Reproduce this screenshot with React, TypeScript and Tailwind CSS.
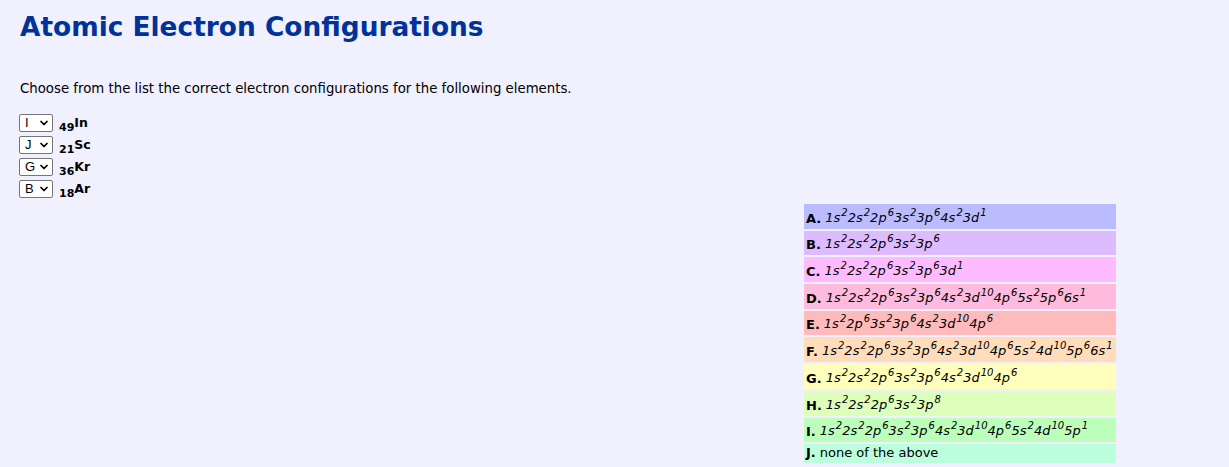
import React from 'react';
import { ChevronDown } from 'lucide-react';

type Answer = {
  letter: string;
  bg: string;
  config: [string, string][];
};

// orbital + electron count pairs; empty config = "none of the above"
const answers: Answer[] = [
  { letter: 'A', bg: 'bg-[#bbbbff]', config: [['1s', '2'], ['2s', '2'], ['2p', '6'], ['3s', '2'], ['3p', '6'], ['4s', '2'], ['3d', '1']] },
  { letter: 'B', bg: 'bg-[#ddbbff]', config: [['1s', '2'], ['2s', '2'], ['2p', '6'], ['3s', '2'], ['3p', '6']] },
  { letter: 'C', bg: 'bg-[#ffbbff]', config: [['1s', '2'], ['2s', '2'], ['2p', '6'], ['3s', '2'], ['3p', '6'], ['3d', '1']] },
  { letter: 'D', bg: 'bg-[#ffbbdd]', config: [['1s', '2'], ['2s', '2'], ['2p', '6'], ['3s', '2'], ['3p', '6'], ['4s', '2'], ['3d', '10'], ['4p', '6'], ['5s', '2'], ['5p', '6'], ['6s', '1']] },
  { letter: 'E', bg: 'bg-[#ffbbbb]', config: [['1s', '2'], ['2p', '6'], ['3s', '2'], ['3p', '6'], ['4s', '2'], ['3d', '10'], ['4p', '6']] },
  { letter: 'F', bg: 'bg-[#ffddbb]', config: [['1s', '2'], ['2s', '2'], ['2p', '6'], ['3s', '2'], ['3p', '6'], ['4s', '2'], ['3d', '10'], ['4p', '6'], ['5s', '2'], ['4d', '10'], ['5p', '6'], ['6s', '1']] },
  { letter: 'G', bg: 'bg-[#ffffbb]', config: [['1s', '2'], ['2s', '2'], ['2p', '6'], ['3s', '2'], ['3p', '6'], ['4s', '2'], ['3d', '10'], ['4p', '6']] },
  { letter: 'H', bg: 'bg-[#ddffbb]', config: [['1s', '2'], ['2s', '2'], ['2p', '6'], ['3s', '2'], ['3p', '8']] },
  { letter: 'I', bg: 'bg-[#bbffbb]', config: [['1s', '2'], ['2s', '2'], ['2p', '6'], ['3s', '2'], ['3p', '6'], ['4s', '2'], ['3d', '10'], ['4p', '6'], ['5s', '2'], ['4d', '10'], ['5p', '1']] },
  { letter: 'J', bg: 'bg-[#bbffdd]', config: [] },
];

const elements = [
  { z: '49', symbol: 'In', picked: 'I' },
  { z: '21', symbol: 'Sc', picked: 'J' },
  { z: '36', symbol: 'Kr', picked: 'G' },
  { z: '18', symbol: 'Ar', picked: 'B' },
];

const letters = ['A', 'B', 'C', 'D', 'E', 'F', 'G', 'H', 'I', 'J'];

const App: React.FC = () => {
  return (
    <div className="min-h-screen bg-[#f0f0ff] px-[20px] pt-[11px] font-['DejaVu_Sans',Verdana,sans-serif] text-black">
      <h1 className="text-[26.4px] leading-[32px] font-bold text-[#003399]">Atomic Electron Configurations</h1>

      <p className="mt-[37.5px] text-[13.3px] leading-[16px]">
        Choose from the list the correct electron configurations for the following elements.
      </p>

      <div className="mt-[15.5px] flex flex-col">
        {elements.map((el) => (
          <div key={el.symbol} className="flex h-[22px] items-center">
            <div className="relative -ml-[1px]">
              <select
                defaultValue={el.picked}
                className="block h-[18px] w-[34px] appearance-none rounded-[2px] border border-[#767676] bg-white pl-[5px] font-['Liberation_Sans',Arial,sans-serif] text-[13px] leading-[16px]"
              >
                {letters.map((l) => (
                  <option key={l} value={l}>
                    {l}
                  </option>
                ))}
              </select>
              <ChevronDown
                className="pointer-events-none absolute top-[3px] right-[3px] h-[12px] w-[12px] text-black"
                strokeWidth={3.5}
              />
            </div>
            <span className="ml-[6px] inline-flex items-baseline font-bold">
              <span className="relative top-[4px] text-[11px]">{el.z}</span>
              <span className="relative top-[0px] text-[12.5px]">{el.symbol}</span>
            </span>
          </div>
        ))}
      </div>

      <div className="mt-[4px] ml-[784px] flex w-[312px] flex-col gap-[2px] text-[13px] leading-[16px]">
        {answers.map((a) => (
          <div
            key={a.letter}
            className={`${a.bg} flex items-end pl-[2px] pb-[2px] ${a.config.length ? 'h-[24.7px]' : 'h-[19px]'}`}
          >
            <span className="font-bold">{a.letter}.</span>
            <span className="ml-[4px] whitespace-nowrap">
              {a.config.length ? (
                <i>
                  {a.config.map(([orb, n], i) => (
                    <React.Fragment key={i}>
                      {orb}
                      <span className="relative -top-[6px] ml-[1px] text-[10px]">{n}</span>
                    </React.Fragment>
                  ))}
                </i>
              ) : (
                'none of the above'
              )}
            </span>
          </div>
        ))}
      </div>
    </div>
  );
};

export default App;
